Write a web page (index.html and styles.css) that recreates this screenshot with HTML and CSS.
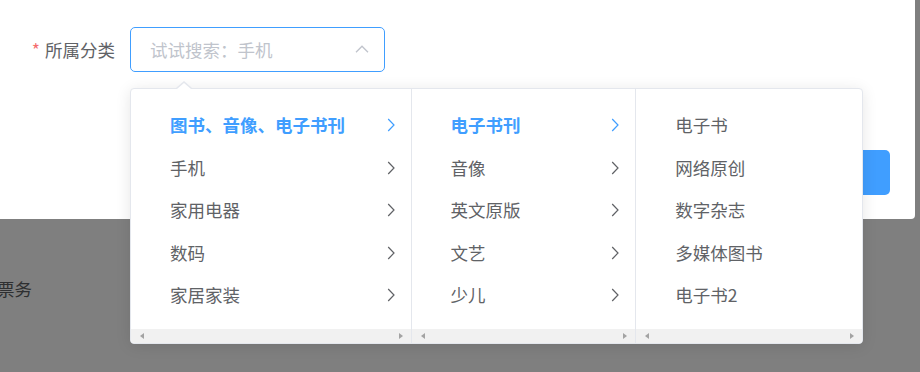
FILE: index.html
```html
<!DOCTYPE html>
<html lang="zh-CN">
<head>
<meta charset="utf-8">
<title>所属分类</title>
<link rel="stylesheet" href="styles.css">
</head>
<body>
<div class="dialog">
  <div class="form-row">
    <label class="label"><span class="req">*</span>所属分类</label>
    <div class="input">
      <span class="placeholder">试试搜索：手机</span>
      <svg class="up" width="14" height="8" viewBox="0 0 14 8"><path d="M1 7.2 L7 1.2 L13 7.2" fill="none" stroke="#c0c4cc" stroke-width="1.3"/></svg>
    </div>
  </div>
  <div class="footer">
    <button class="btn">确 定</button>
  </div>
</div>
<div class="page">
  <div class="page-text">票务</div>
</div>

<div class="popper">
  <div class="menus">
    <div class="menu m1">
      <ul class="list">
        <li class="node active"><span class="t">图书、音像、电子书刊</span><svg class="chev" width="8" height="14" viewBox="0 0 8 14"><path d="M1.2 1 L7 7 L1.2 13" fill="none" stroke="currentColor" stroke-width="1.2"/></svg></li>
        <li class="node"><span class="t">手机</span><svg class="chev" width="8" height="14" viewBox="0 0 8 14"><path d="M1.2 1 L7 7 L1.2 13" fill="none" stroke="currentColor" stroke-width="1.2"/></svg></li>
        <li class="node"><span class="t">家用电器</span><svg class="chev" width="8" height="14" viewBox="0 0 8 14"><path d="M1.2 1 L7 7 L1.2 13" fill="none" stroke="currentColor" stroke-width="1.2"/></svg></li>
        <li class="node"><span class="t">数码</span><svg class="chev" width="8" height="14" viewBox="0 0 8 14"><path d="M1.2 1 L7 7 L1.2 13" fill="none" stroke="currentColor" stroke-width="1.2"/></svg></li>
        <li class="node"><span class="t">家居家装</span><svg class="chev" width="8" height="14" viewBox="0 0 8 14"><path d="M1.2 1 L7 7 L1.2 13" fill="none" stroke="currentColor" stroke-width="1.2"/></svg></li>
        <li class="node"><span class="t">电脑办公</span><svg class="chev" width="8" height="14" viewBox="0 0 8 14"><path d="M1.2 1 L7 7 L1.2 13" fill="none" stroke="currentColor" stroke-width="1.2"/></svg></li>
      </ul>
      <div class="hbar"><i class="tri-l"></i><i class="tri-r"></i></div>
    </div>
    <div class="menu m2">
      <ul class="list">
        <li class="node active"><span class="t">电子书刊</span><svg class="chev" width="8" height="14" viewBox="0 0 8 14"><path d="M1.2 1 L7 7 L1.2 13" fill="none" stroke="currentColor" stroke-width="1.2"/></svg></li>
        <li class="node"><span class="t">音像</span><svg class="chev" width="8" height="14" viewBox="0 0 8 14"><path d="M1.2 1 L7 7 L1.2 13" fill="none" stroke="currentColor" stroke-width="1.2"/></svg></li>
        <li class="node"><span class="t">英文原版</span><svg class="chev" width="8" height="14" viewBox="0 0 8 14"><path d="M1.2 1 L7 7 L1.2 13" fill="none" stroke="currentColor" stroke-width="1.2"/></svg></li>
        <li class="node"><span class="t">文艺</span><svg class="chev" width="8" height="14" viewBox="0 0 8 14"><path d="M1.2 1 L7 7 L1.2 13" fill="none" stroke="currentColor" stroke-width="1.2"/></svg></li>
        <li class="node"><span class="t">少儿</span><svg class="chev" width="8" height="14" viewBox="0 0 8 14"><path d="M1.2 1 L7 7 L1.2 13" fill="none" stroke="currentColor" stroke-width="1.2"/></svg></li>
        <li class="node"><span class="t">人文社科</span><svg class="chev" width="8" height="14" viewBox="0 0 8 14"><path d="M1.2 1 L7 7 L1.2 13" fill="none" stroke="currentColor" stroke-width="1.2"/></svg></li>
      </ul>
      <div class="hbar"><i class="tri-l"></i><i class="tri-r"></i></div>
    </div>
    <div class="menu m3">
      <ul class="list">
        <li class="node"><span class="t">电子书</span></li>
        <li class="node"><span class="t">网络原创</span></li>
        <li class="node"><span class="t">数字杂志</span></li>
        <li class="node"><span class="t">多媒体图书</span></li>
        <li class="node"><span class="t">电子书2</span></li>
      </ul>
      <div class="hbar"><i class="tri-l"></i><i class="tri-r"></i></div>
    </div>
  </div>
</div>
</body>
</html>
```

FILE: styles.css
```css
* { box-sizing: border-box; }
html, body { margin: 0; padding: 0; }
body {
  width: 920px;
  height: 372px;
  overflow: hidden;
  background: #7f7f7f;
  font-family: "Microsoft YaHei", "Noto Sans CJK SC", "Noto Sans", sans-serif;
  font-size: 17.5px;
  position: relative;
}

.dialog {
  width: 915px;
  height: 219px;
  background: #fff;
  border-bottom-right-radius: 4px;
  padding-top: 27px;
}
.form-row {
  display: flex;
  align-items: center;
  height: 45px;
}
.label {
  width: 130px;
  padding-right: 15px;
  text-align: right;
  color: #606266;
  line-height: 20px;
}
.req { color: #f56c6c; margin-right: 5px; }
.input {
  width: 255px;
  height: 45px;
  border: 1px solid #409eff;
  border-radius: 5px;
  display: flex;
  align-items: center;
  padding-left: 19px;
  padding-right: 15px;
}
.placeholder { flex: 1; color: #c0c4cc; line-height: 20px; }
.up { display: block; margin-top: -1px; }

.footer {
  display: flex;
  justify-content: flex-end;
  padding-right: 25px;
  margin-top: 78px;
}
.btn {
  width: 100px;
  height: 45px;
  border: none;
  border-radius: 5px;
  background: #409eff;
  color: #fff;
  font: inherit;
}

.page { padding-top: 60px; }
.page-text {
  margin-left: -3px;
  color: #2e2f31;
  line-height: 20px;
}

.popper {
  position: absolute;
  left: 130px;
  top: 88px;
  width: 733px;
  height: 256px;
  background: #fff;
  border: 1px solid #e4e7ed;
  border-radius: 4px;
  box-shadow: 0 2px 15px rgba(0, 0, 0, 0.1);
}
.popper::before,
.popper::after {
  content: "";
  position: absolute;
  width: 0;
  height: 0;
  border-style: solid;
  border-color: transparent;
}
.popper::before {
  left: 45px;
  top: -8px;
  border-width: 0 8px 7px 8px;
  border-bottom-color: #e4e7ed;
}
.popper::after {
  left: 46px;
  top: -6px;
  border-width: 0 7px 6px 7px;
  border-bottom-color: #fff;
}

.menus {
  display: flex;
  height: 100%;
  border-radius: 4px;
  overflow: hidden;
}
.menu {
  display: flex;
  flex-direction: column;
  border-right: 1px solid #e4e7ed;
}
.menu.m1 { width: 281px; }
.menu.m2 { width: 225px; }
.menu.m3 { width: 226px; border-right: none; }

.list {
  list-style: none;
  margin: 0;
  padding: 15px 0 0;
  height: 241px;
  overflow: hidden;
}
.node {
  height: 42.5px;
  display: flex;
  align-items: center;
  padding-left: 39px;
  padding-right: 16px;
  color: #606266;
}
.menu.m1 .node { padding-left: 39px; }
.node .t { flex: 1; line-height: 20px; white-space: nowrap; }
.node .chev { display: block; color: #606266; }
.node.active { color: #409eff; font-weight: bold; }
.node.active .chev { color: #409eff; }

.hbar {
  height: 14px;
  background: #f1f1f1;
  display: flex;
  align-items: center;
  justify-content: space-between;
  padding: 0 8px 0 9px;
}
.tri-l, .tri-r {
  display: block;
  width: 0;
  height: 0;
  border-style: solid;
  border-color: transparent;
}
.tri-l {
  border-width: 3.5px 4px 3.5px 0;
  border-right-color: #a3a3a3;
}
.tri-r {
  border-width: 3.5px 0 3.5px 4px;
  border-left-color: #a3a3a3;
}
```
